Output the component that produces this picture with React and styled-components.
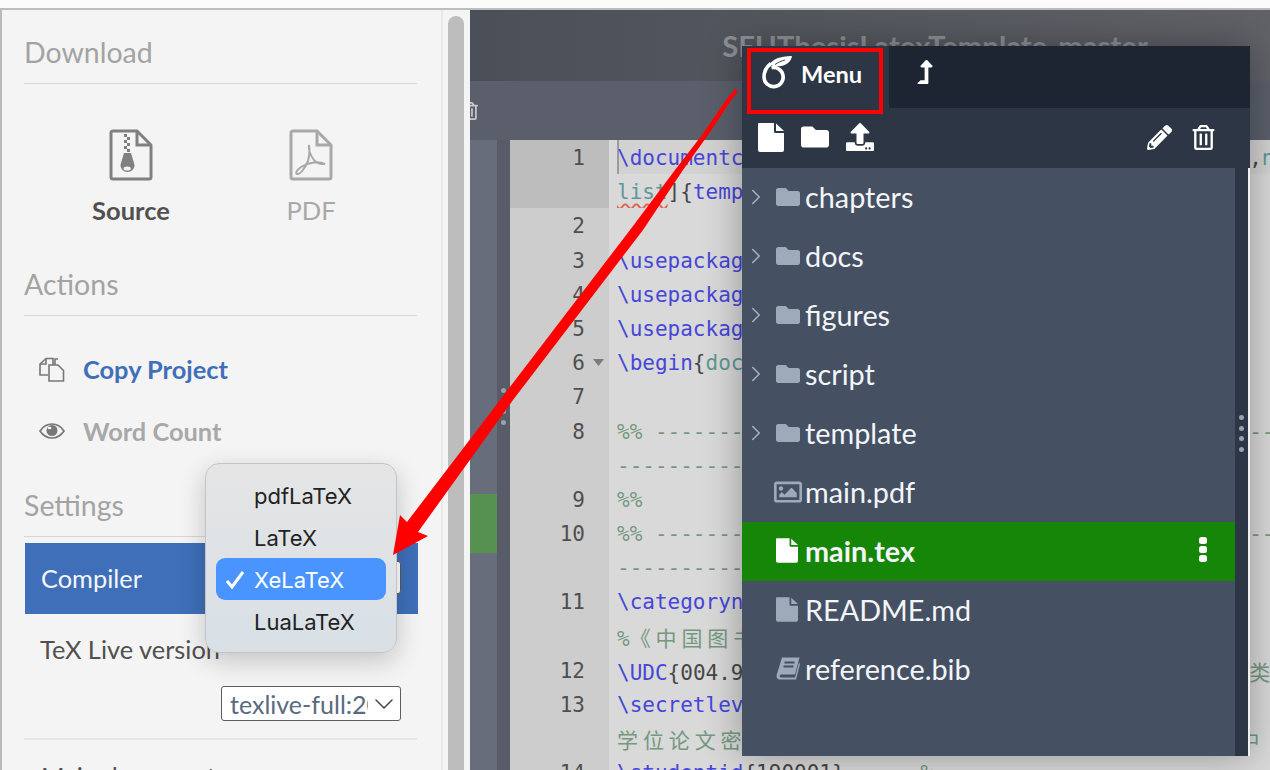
import React from "react";
import styled, { createGlobalStyle } from "styled-components";
import { ChevronDown, ChevronRight } from "lucide-react";
import {
  FaFolder, FaUpload, FaPencilAlt, FaRegTrashAlt, FaLevelUpAlt, FaRegImage,
} from "react-icons/fa";

const Global = createGlobalStyle`
  html, body { margin: 0; padding: 0; background: #fff; overflow: hidden; }
  * { box-sizing: border-box; }
`;

const Page = styled.div`
  position: relative;
  width: 1270px;
  height: 770px;
  overflow: hidden;
  background: #fbfbfb;
  font-family: Lato, "Noto Sans", sans-serif;
  padding-top: 8px;
`;
const Frame = styled.div`
  display: flex;
  height: 762px;
  border-top: 2px solid #bdbdbd;
`;

/* ---------- left sidebar ---------- */
const Sidebar = styled.aside`
  width: 443px;
  flex: none;
  background: #f4f4f4;
  border-left: 2px solid #b9b9b9;
  border-right: 2px solid #e8e8e8;
  padding: 0 24px 0 22px;
  overflow: hidden;
`;
const ScrollTrack = styled.div`
  width: 27px;
  flex: none;
  background: #f4f4f4;
  padding: 6px 6px 0 5px;
`;
const ScrollThumb = styled.div`
  height: 800px;
  background: #bdbdbd;
  border-radius: 8px;
`;
const SectionTitle = styled.h3`
  margin: ${(p) => p.$top}px 0 0;
  box-sizing: content-box;
  height: 34px;
  line-height: 34px;
  padding: 0 0 14px 0;
  font-size: 28.5px;
  font-weight: 400;
  color: #a3a3a3;
  border-bottom: 1px solid #d6d6d6;
`;
const Downloads = styled.div`
  display: flex;
  height: 183px;
  padding: 45px 0 0 17px;
`;
const DownloadItem = styled.div`
  width: 180px;
  flex: none;
  display: flex;
  flex-direction: column;
  align-items: center;
  gap: 11px;
  font-size: 25.5px;
  line-height: 36px;
  font-weight: ${(p) => (p.$on ? 700 : 400)};
  color: ${(p) => (p.$on ? "#505050" : "#a8a8a8")};
`;
const Actions = styled.div`
  padding-top: 22px;
`;
const ActionRow = styled.div`
  display: flex;
  align-items: center;
  height: 62px;
  padding-left: 15px;
  gap: 18px;
  font-size: 25.4px;
  font-weight: 700;
  color: ${(p) => p.$color};
  svg { flex: none; }
`;
const CompilerRow = styled.div`
  display: flex;
  align-items: center;
  justify-content: space-between;
  height: 71px;
  width: 393px;
  margin: 6px 0 0 1px;
  padding: 0 17px 2px 16px;
  background: #3f6fb8;
  color: #f4f6fa;
  font-size: 25.4px;
`;
const NativeSelect = styled.div`
  display: flex;
  align-items: center;
  justify-content: space-between;
  width: 180px;
  height: ${(p) => p.$h}px;
  flex: none;
  background: #fff;
  border: 1px solid #5d5d5d;
  border-radius: 3px;
  padding-left: 8px;
  color: #5a6b80;
  font-size: 25px;
  svg { flex: none; }
`;
const SelectText = styled.span`
  display: block;
  width: 138px;
  overflow: hidden;
  white-space: nowrap;
`;
const SettingLabel = styled.div`
  height: 72px;
  display: flex;
  align-items: center;
  padding: 0 0 2px 16px;
  font-size: 25.4px;
  color: #505050;
`;
const SelectLine = styled.div`
  display: flex;
  justify-content: flex-end;
  padding-right: 16px;
`;
const Rule = styled.hr`
  margin: 17px 0 0;
  border: 0;
  border-top: 2px solid #e6e6e6;
`;
const MainDoc = styled.div`
  padding: 19px 0 0 17px;
  font-size: 25.4px;
  line-height: 34px;
  color: #505050;
`;

/* ---------- editor behind the menu ---------- */
const Editor = styled.main`
  flex: 1;
  min-width: 0;
  display: flex;
  flex-direction: column;
  overflow: hidden;
  background: #5a5f6b;
`;
const EditorHeader = styled.header`
  height: 71px;
  flex: none;
  display: flex;
  justify-content: center;
  padding: 19px 0 0 130px;
  background: linear-gradient(to right, #4b4f58, #606267);
  color: #8c8f95;
  font-size: 29.3px;
  font-weight: 700;
  line-height: 34px;
  white-space: nowrap;
`;
const EditorToolbar = styled.div`
  height: 59px;
  flex: none;
  display: flex;
  align-items: center;
  background: #5a5f6b;
  color: #c8cad0;
  svg { margin-left: -9px; }
`;
const EditorBody = styled.div`
  flex: 1;
  min-height: 0;
  display: flex;
`;
const TreeColumn = styled.div`
  width: 27px;
  flex: none;
  background: #676d7a;
  padding-top: 354px;
`;
const TreeActive = styled.div`
  height: 59px;
  background: #56914f;
`;
const Resizer = styled.div`
  width: 13px;
  flex: none;
  background: #585c68;
  display: flex;
  flex-direction: column;
  align-items: center;
  gap: 5.5px;
  padding-top: 248px;
`;
const Dot = styled.span`
  width: 5px;
  height: 5px;
  flex: none;
  border-radius: 50%;
  background: #9aa0ac;
`;
const Code = styled.div`
  flex: 1;
  min-width: 0;
  background: #d9d9d9;
  font-family: "DejaVu Sans Mono", "Noto Sans CJK SC", monospace;
  font-size: 21px;
  line-height: 37.5px;
`;
const CodeRow = styled.div`
  display: flex;
`;
const Gutter = styled.div`
  width: 99px;
  flex: none;
  display: flex;
  justify-content: flex-end;
  align-items: flex-start;
  padding-right: 2px;
  background: ${(p) => (p.$active ? "#bdbdbd" : "#cdcdcd")};
  color: #4f4f4f;
`;
const LineNo = styled.span`
  height: 34.2px;
`;
const FoldSlot = styled.span`
  width: 22px;
  height: 34px;
  flex: none;
  display: flex;
  align-items: center;
  justify-content: flex-end;
  padding-right: 3px;
  color: #7c7c7c;
`;
const CodeText = styled.div`
  flex: 1;
  min-width: 0;
  overflow: hidden;
  padding-left: 8px;
`;
const CodeLine = styled.div`
  height: 34.2px;
  white-space: pre;
  ${(p) => p.$cursor && "box-shadow: inset 2px 0 0 #9b9b9b; background: #d2d2d2;"}
`;
const Tok = styled.span`
  color: ${(p) => ({ cmd: "#4646d8", arg: "#5f9797", plain: "#474747", com: "#74987f" }[p.$k])};
  ${(p) => p.$err && "text-decoration: underline wavy #e0604c 1.5px; text-underline-offset: 4px;"}
`;
const Cjk = styled.span`
  font-family: "Noto Sans CJK SC", sans-serif;
  letter-spacing: 4.9px;
  color: #74987f;
`;

/* ---------- file tree menu ---------- */
const MenuPanel = styled.section`
  position: absolute;
  left: 742px;
  top: 46px;
  width: 508px;
  height: 710px;
  display: flex;
  flex-direction: column;
  background: #2c3645;
  box-shadow: 0 0 36px rgba(0, 0, 0, 0.32);
  color: #fff;
`;
const TopBar = styled.div`
  height: 62px;
  flex: none;
  display: flex;
  background: #1e2532;
`;
const MenuTab = styled.div`
  width: 147px;
  flex: none;
  display: flex;
  align-items: center;
  gap: 7px;
  padding: 0 0 6px 19px;
  background: #2c3645;
  font-size: 23.6px;
  font-weight: 700;
`;
const TopIcon = styled.div`
  display: flex;
  align-items: center;
  padding: 0 0 10px 24px;
`;
const HotRect = styled.div`
  position: absolute;
  left: 5px;
  top: 2px;
  width: 136px;
  height: 66px;
  border: 4px solid #ff0000;
`;
const ActionBar = styled.div`
  height: 60px;
  flex: none;
  display: flex;
  align-items: center;
  justify-content: space-between;
  padding: 0 34px 2px 16px;
`;
const IconGroup = styled.div`
  display: flex;
  align-items: center;
  gap: ${(p) => p.$gap}px;
`;
const TreeArea = styled.div`
  flex: 1;
  display: flex;
  min-height: 0;
  padding-right: 2px;
  background: linear-gradient(to right, #2c3645 calc(100% - 2px), #f0f0f0 calc(100% - 2px));
`;
const TreeList = styled.div`
  flex: 1;
  background: #455163;
`;
const TreeStrip = styled.div`
  width: 13px;
  flex: none;
  display: flex;
  flex-direction: column;
  align-items: center;
  gap: 5.5px;
  padding-top: 247px;
`;
const TreeRow = styled.div`
  position: relative;
  height: 59px;
  display: flex;
  align-items: center;
  padding-bottom: 2px;
  font-size: 28.8px;
  font-weight: ${(p) => (p.$on ? 700 : 400)};
  background: ${(p) => (p.$on ? "#158607" : "transparent")};
  color: #f3f5f8;
`;
const Chevron = styled.span`
  width: 34px;
  flex: none;
  display: flex;
  padding-left: 1px;
  color: #a6b0bf;
`;
const FileIcon = styled.span`
  width: 29px;
  flex: none;
  display: flex;
  align-items: center;
  color: ${(p) => (p.$on ? "#fff" : "#9daaba")};
`;
const RowDots = styled.span`
  position: absolute;
  right: 28px;
  top: 15px;
  display: flex;
  flex-direction: column;
  gap: 2px;
`;
const RowDot = styled.span`
  width: 8px;
  height: 7px;
  border-radius: 2.5px;
  background: #fff;
`;

/* ---------- native popup ---------- */
const Popup = styled.div`
  position: absolute;
  left: 205px;
  top: 463px;
  width: 192px;
  height: 190px;
  padding: 10px;
  border-radius: 14px;
  border: 1px solid #c4c4c4;
  background: linear-gradient(#e5e5e5, #d8e0e6);
  box-shadow: 0 8px 26px rgba(0, 0, 0, 0.2);
  font-family: Inter, "Liberation Sans", sans-serif;
  font-size: 22px;
  color: #222;
`;
const PopupItem = styled.div`
  position: relative;
  height: 42px;
  line-height: 45px;
  padding-left: 38px;
  border-radius: 9px;
  ${(p) => p.$on && "background: #4a94ff; color: #fff;"}
`;
const Tick = styled.svg`
  position: absolute;
  left: 9px;
  top: 13px;
`;
const ArrowLayer = styled.svg`
  position: absolute;
  left: 0;
  top: 0;
  pointer-events: none;
`;

const ZipIcon = () => (
  <svg width="44" height="52" viewBox="0 0 44 52">
    <path d="M2 4a2 2 0 0 1 2-2h24l14 14v32a2 2 0 0 1-2 2H4a2 2 0 0 1-2-2z" fill="none" stroke="#808080" strokeWidth="3" />
    <path d="M28 2v14h14" fill="none" stroke="#808080" strokeWidth="3" />
    <path d="M15 5h3v3h-3zM18 8h3v3h-3zM15 11h3v3h-3zM18 14h3v3h-3zM15 17h3v3h-3zM18 20h3v3h-3z" fill="#808080" />
    <path d="M15 24h7l3 10a7 6.5 0 1 1-13 0z" fill="#808080" />
    <ellipse cx="18.2" cy="39.5" rx="3.6" ry="2" fill="#f4f4f4" />
  </svg>
);
const PdfIcon = () => (
  <svg width="44" height="52" viewBox="0 0 44 52">
    <path d="M2 4a2 2 0 0 1 2-2h24l14 14v32a2 2 0 0 1-2 2H4a2 2 0 0 1-2-2z" fill="none" stroke="#a8a8a8" strokeWidth="3" />
    <path d="M28 2v14h14" fill="none" stroke="#a8a8a8" strokeWidth="3" />
    <path d="M20 16c-1 6 2 11 5 15s7 4 11 4c-6-3-16-2-24 3-4 3-6 6-4 7 3 1 8-6 11-13 1-4 2-10 1-16" fill="none" stroke="#a8a8a8" strokeWidth="2" />
  </svg>
);
const CopyIcon = () => (
  <svg width="26" height="25" viewBox="0 0 26 25" fill="none" stroke="#777" strokeWidth="1.6">
    <path d="M14 8V1.5H7L1 7v11h8" />
    <path d="M7 1.5V7H1" />
    <path d="M24.5 24H10V8h9l5.5 5.5z" fill="#f4f4f4" />
    <path d="M19 2h-3v6" />
  </svg>
);
const EyeIcon = () => (
  <svg width="26" height="16" viewBox="0 0 26 16">
    <path d="M1 8c3-4.5 7-7 12-7s9 2.5 12 7c-3 4.5-7 7-12 7S4 12.5 1 8z" fill="none" stroke="#777" strokeWidth="1.7" />
    <circle cx="13" cy="7.5" r="5.5" fill="#777" />
    <ellipse cx="10.5" cy="5" rx="2" ry="1.2" fill="#f4f4f4" />
  </svg>
);
const OverleafLogo = () => (
  <svg width="33" height="37" viewBox="0 0 33 37" style={{ flex: "none" }}>
    <path d="M10.5 11.7A9.6 9.6 0 1 1 3 21C3 15 6 10.5 10 7.5" fill="none" stroke="#fff" strokeWidth="3.6" />
    <path d="M9 8C12 3 18 0.5 31 0 30 6 25 10.5 15 10.5 13 10.5 11.5 10 9 8z" fill="#fff" />
    <path d="M14 8.5C17 6.5 20 5 24 4" fill="none" stroke="#2c3645" strokeWidth="0.9" />
  </svg>
);
const FileGlyph = ({ w, h }) => (
  <svg width={w} height={h} viewBox="0 0 26 29" fill="currentColor" style={{ flex: "none" }}>
    <path d="M1 0h15v8.5a1.5 1.5 0 0 0 1.5 1.5H26v17a2 2 0 0 1-2 2H2a2 2 0 0 1-2-2V1a1 1 0 0 1 1-1z" />
    <path d="M18 0.5 26 8h-8z" />
  </svg>
);
const BookGlyph = () => (
  <svg width="24" height="23" viewBox="0 0 24 23" style={{ flex: "none" }}>
    <path d="M6 0.5H23.5L19 17.5H5.5C3 17.5 3 20.5 5.5 20.5H19L23 5.5 24 7 20 22.5H4C1 22.5 0 20 0.8 17.5z" fill="currentColor" />
    <path d="M8.5 5.5H18.5M7.5 9.5H17.5" stroke="#455163" strokeWidth="1.8" fill="none" />
  </svg>
);

const dashes = (n) => "-".repeat(n);
const R = ({ k, err, children }) => <Tok $k={k} $err={err}>{children}</Tok>;

const rows = [
  { n: 1, active: true, lines: [
    <><R k="cmd">\documentclass</R><R k="plain">[</R><R k="arg">degree=master,type=professional,bib</R><R k="plain">,</R><R k="arg">n</R></>,
    <><R k="arg" err>list</R><R k="plain">]{"{"}</R><R k="cmd">template/seuthesis</R><R k="plain">{"}"}</R></>,
  ] },
  { n: 2, lines: [" "] },
  { n: 3, lines: [<><R k="cmd">\usepackage</R><R k="plain">{"{"}</R><R k="arg">amsmath</R><R k="plain">{"}"}</R></>] },
  { n: 4, lines: [<><R k="cmd">\usepackage</R><R k="plain">{"{"}</R><R k="arg">graphicx</R><R k="plain">{"}"}</R></>] },
  { n: 5, lines: [<><R k="cmd">\usepackage</R><R k="plain">{"{"}</R><R k="arg">hyperref</R><R k="plain">{"}"}</R></>] },
  { n: 6, fold: true, lines: [<><R k="cmd">\begin</R><R k="plain">{"{"}</R><R k="arg">document</R><R k="plain">{"}"}</R></>] },
  { n: 7, lines: [" "] },
  { n: 8, lines: [<R k="com">%% {dashes(60)}</R>, <R k="com">{dashes(40)}</R>] },
  { n: 9, lines: [<R k="com">%%</R>] },
  { n: 10, lines: [<R k="com">%% {dashes(60)}</R>, <R k="com">{dashes(40)}</R>] },
  { n: 11, lines: [
    <><R k="cmd">\categorynumber</R><R k="plain">{"{"}</R><R k="arg">TP391</R><R k="plain">{"}"}</R></>,
    <><R k="com">%</R><Cjk>《中国图书资料分类法》</Cjk></>,
  ] },
  { n: 12, lines: [<><R k="cmd">\UDC</R><R k="plain">{"{"}004.9{"}"}</R><R k="com">{" ".repeat(38)}%</R><Cjk>类</Cjk></>] },
  { n: 13, lines: [
    <><R k="cmd">\secretlevel</R><R k="plain">{"{"}</R><R k="arg">公开</R><R k="plain">{"}"}</R></>,
    <Cjk>学位论文密级分为公开内部秘密机密绝密等共五个等级中</Cjk>,
  ] },
  { n: 14, lines: [<><R k="cmd">\studentid</R><R k="plain">{"{"}190001{"}"}</R><R k="com">{" ".repeat(6)}%</R></>] },
];

const tree = [
  { name: "chapters", dir: true }, { name: "docs", dir: true }, { name: "figures", dir: true },
  { name: "script", dir: true }, { name: "template", dir: true },
  { name: "main.pdf", icon: "img" }, { name: "main.tex", icon: "file", on: true },
  { name: "README.md", icon: "file" }, { name: "reference.bib", icon: "book" },
];
const iconFor = (t) => {
  if (t.dir) return <FaFolder size={24} />;
  if (t.icon === "img") return <FaRegImage size={28} style={{ marginLeft: -2 }} />;
  if (t.icon === "book") return <BookGlyph />;
  return <FileGlyph w={22} h={25} />;
};

export default function App() {
  return (
    <Page>
      <Global />
      <Frame>
        <Sidebar>
          <SectionTitle $top={25}>Download</SectionTitle>
          <Downloads>
            <DownloadItem $on><ZipIcon />Source</DownloadItem>
            <DownloadItem><PdfIcon />PDF</DownloadItem>
          </Downloads>
          <SectionTitle $top={0}>Actions</SectionTitle>
          <Actions>
            <ActionRow $color="#3f6fb8"><CopyIcon />Copy Project</ActionRow>
            <ActionRow $color="#a8a8a8"><EyeIcon />Word Count</ActionRow>
          </Actions>
          <SectionTitle $top={26}>Settings</SectionTitle>
          <CompilerRow>Compiler<NativeSelect $h={33} /></CompilerRow>
          <SettingLabel>TeX Live version</SettingLabel>
          <SelectLine>
            <NativeSelect $h={35}>
              <SelectText>texlive-full:2021</SelectText>
              <ChevronDown size={32} strokeWidth={1.1} color="#444" />
            </NativeSelect>
          </SelectLine>
          <Rule />
          <MainDoc>Main document</MainDoc>
        </Sidebar>
        <ScrollTrack><ScrollThumb /></ScrollTrack>
        <Editor>
          <EditorHeader>SEUThesisLatexTemplate-master</EditorHeader>
          <EditorToolbar><FaRegTrashAlt size={18} /></EditorToolbar>
          <EditorBody>
            <TreeColumn><TreeActive /></TreeColumn>
            <Resizer><Dot /><Dot /><Dot /><Dot /></Resizer>
            <Code>
              {rows.map((r) => (
                <CodeRow key={r.n}>
                  <Gutter $active={r.active}>
                    <LineNo>{r.n}</LineNo>
                    <FoldSlot>
                      {r.fold && (
                        <svg width="11" height="7" viewBox="0 0 11 7"><path d="M0 0h11L5.5 7z" fill="currentColor" /></svg>
                      )}
                    </FoldSlot>
                  </Gutter>
                  <CodeText>
                    {r.lines.map((l, i) => (
                      <CodeLine key={i} $cursor={r.active && i === 0}>{l}</CodeLine>
                    ))}
                  </CodeText>
                </CodeRow>
              ))}
            </Code>
          </EditorBody>
        </Editor>
      </Frame>

      <MenuPanel>
        <TopBar>
          <MenuTab><OverleafLogo />Menu</MenuTab>
          <TopIcon><FaLevelUpAlt size={24} /></TopIcon>
        </TopBar>
        <ActionBar>
          <IconGroup $gap={17}>
            <FileGlyph w={26} h={29} />
            <FaFolder size={28} />
            <FaUpload size={28} />
          </IconGroup>
          <IconGroup $gap={19}>
            <FaPencilAlt size={25} />
            <FaRegTrashAlt size={25} />
          </IconGroup>
        </ActionBar>
        <TreeArea>
          <TreeList>
            {tree.map((t) => (
              <TreeRow key={t.name} $on={t.on}>
                <Chevron>{t.dir && <ChevronRight size={26} strokeWidth={1.4} />}</Chevron>
                <FileIcon $on={t.on}>{iconFor(t)}</FileIcon>
                {t.name}
                {t.on && <RowDots><RowDot /><RowDot /><RowDot /></RowDots>}
              </TreeRow>
            ))}
          </TreeList>
          <TreeStrip><Dot /><Dot /><Dot /><Dot /></TreeStrip>
        </TreeArea>
        <HotRect />
      </MenuPanel>

      <Popup>
        <PopupItem>pdfLaTeX</PopupItem>
        <PopupItem>LaTeX</PopupItem>
        <PopupItem $on>
          <Tick width="20" height="18" viewBox="0 0 20 18"><path d="M2 10l5 6L18 1" fill="none" stroke="#fff" strokeWidth="3" /></Tick>
          XeLaTeX
        </PopupItem>
        <PopupItem>LuaLaTeX</PopupItem>
      </Popup>

      <ArrowLayer width="1270" height="770" viewBox="0 0 1270 770">
        <polygon points="735,89 726,100 702,135 675,170 630,230 500,400 407,522 400,515 393,555 428,536 418,532 513,400 643,230 683,170 708,135 730,102 738,91" fill="#ff0000" />
      </ArrowLayer>
    </Page>
  );
}
